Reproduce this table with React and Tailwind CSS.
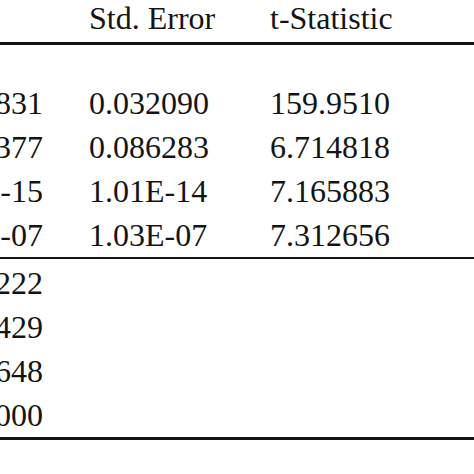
import React from "react";

const topRows = [
  ["5.132831", "0.032090", "159.9510"],
  ["0.579377", "0.086283", "6.714818"],
  ["7.26E-15", "1.01E-14", "7.165883"],
  ["7.56E-07", "1.03E-07", "7.312656"],
];

const statRows = ["0.868222", "0.866429", "3.457648", "0.000000"];

const Row = ({ cells }) => (
  <div className="flex leading-[44px] whitespace-nowrap">
    <div className="w-[43px] flex justify-end">
      <span>{cells[0]}</span>
    </div>
    <div className="w-[181px] ml-[46px]">{cells[1]}</div>
    <div>{cells[2]}</div>
  </div>
);

export default function App() {
  return (
    <div
      className="w-[474px] h-[474px] bg-white text-[#141414] text-[32px] overflow-hidden"
      style={{ fontFamily: '"Liberation Serif", "Times New Roman", serif' }}
    >
      <div className="flex leading-[36px] pb-[6px] border-b-[3px] border-[#141414] whitespace-nowrap">
        <div className="w-[43px]" />
        <div className="w-[181px] ml-[46px]">Std. Error</div>
        <div>t-Statistic</div>
      </div>

      <div className="pt-[36px] border-b-2 border-[#141414]">
        {topRows.map((r, i) => (
          <Row key={i} cells={r} />
        ))}
      </div>

      <div className="pt-[2px] border-b-[3px] border-[#141414]">
        {statRows.map((v, i) => (
          <Row key={i} cells={[v, "", ""]} />
        ))}
      </div>
    </div>
  );
}
